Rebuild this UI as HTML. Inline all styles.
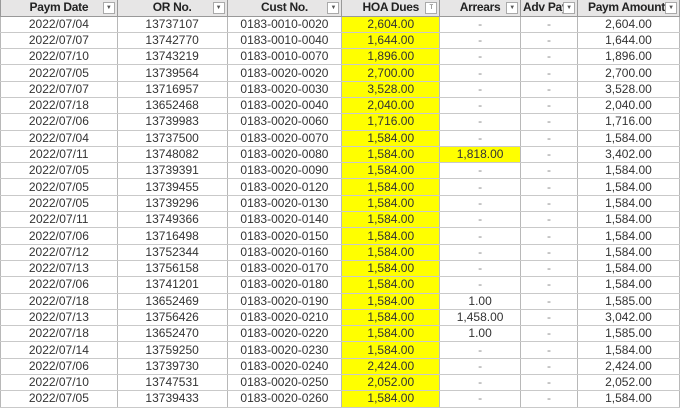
<!DOCTYPE html><html><head><style>
body{margin:0;width:680px;height:403px;overflow:hidden;background:#fff;font-family:"Liberation Sans",sans-serif;}
table{border-collapse:collapse;table-layout:fixed;position:absolute;left:0;top:-1px;font-size:12px;color:#333;}
td{height:15.3px;padding:0;border:1px solid #c9c9c9;border-left:1px solid #b8b8b8;border-right:1px solid #b8b8b8;text-align:center;white-space:nowrap;overflow:hidden;line-height:15px}
tr.h td{height:15.5px;background:#e7e6e6;font-weight:bold;color:#222;border-color:#999;position:relative;text-align:center;letter-spacing:-0.3px}
.f{position:absolute;right:2px;top:2px;width:10px;height:10px;border:1px solid #aaa;background:#fff;font-size:6px;line-height:10px;color:#555;font-weight:normal;text-align:center}
.y{background:#ffff00}
.d{color:#888}
</style></head><body>
<table>
<colgroup><col style="width:117px"><col style="width:110px"><col style="width:115px"><col style="width:98px"><col style="width:81px"><col style="width:57px"><col style="width:102px"></colgroup>
<tr class="h"><td>Paym Date<span class="f">▼</span></td><td>OR No.<span class="f">▼</span></td><td>Cust No.<span class="f">▼</span></td><td>HOA Dues<span class="f">T</span></td><td>Arrears<span class="f">▼</span></td><td style="text-align:left;padding-left:2px">Adv Pay<span class="f">▼</span></td><td style="text-align:left;padding-left:10px">Paym Amount<span class="f">▼</span></td></tr>
<tr><td>2022/07/04</td><td>13737107</td><td>0183-0010-0020</td><td class="y">2,604.00</td><td class="d">-</td><td class="d">-</td><td>2,604.00</td></tr>
<tr><td>2022/07/07</td><td>13742770</td><td>0183-0010-0040</td><td class="y">1,644.00</td><td class="d">-</td><td class="d">-</td><td>1,644.00</td></tr>
<tr><td>2022/07/10</td><td>13743219</td><td>0183-0010-0070</td><td class="y">1,896.00</td><td class="d">-</td><td class="d">-</td><td>1,896.00</td></tr>
<tr><td>2022/07/05</td><td>13739564</td><td>0183-0020-0020</td><td class="y">2,700.00</td><td class="d">-</td><td class="d">-</td><td>2,700.00</td></tr>
<tr><td>2022/07/07</td><td>13716957</td><td>0183-0020-0030</td><td class="y">3,528.00</td><td class="d">-</td><td class="d">-</td><td>3,528.00</td></tr>
<tr><td>2022/07/18</td><td>13652468</td><td>0183-0020-0040</td><td class="y">2,040.00</td><td class="d">-</td><td class="d">-</td><td>2,040.00</td></tr>
<tr><td>2022/07/06</td><td>13739983</td><td>0183-0020-0060</td><td class="y">1,716.00</td><td class="d">-</td><td class="d">-</td><td>1,716.00</td></tr>
<tr><td>2022/07/04</td><td>13737500</td><td>0183-0020-0070</td><td class="y">1,584.00</td><td class="d">-</td><td class="d">-</td><td>1,584.00</td></tr>
<tr><td>2022/07/11</td><td>13748082</td><td>0183-0020-0080</td><td class="y">1,584.00</td><td class="y">1,818.00</td><td class="d">-</td><td>3,402.00</td></tr>
<tr><td>2022/07/05</td><td>13739391</td><td>0183-0020-0090</td><td class="y">1,584.00</td><td class="d">-</td><td class="d">-</td><td>1,584.00</td></tr>
<tr><td>2022/07/05</td><td>13739455</td><td>0183-0020-0120</td><td class="y">1,584.00</td><td class="d">-</td><td class="d">-</td><td>1,584.00</td></tr>
<tr><td>2022/07/05</td><td>13739296</td><td>0183-0020-0130</td><td class="y">1,584.00</td><td class="d">-</td><td class="d">-</td><td>1,584.00</td></tr>
<tr><td>2022/07/11</td><td>13749366</td><td>0183-0020-0140</td><td class="y">1,584.00</td><td class="d">-</td><td class="d">-</td><td>1,584.00</td></tr>
<tr><td>2022/07/06</td><td>13716498</td><td>0183-0020-0150</td><td class="y">1,584.00</td><td class="d">-</td><td class="d">-</td><td>1,584.00</td></tr>
<tr><td>2022/07/12</td><td>13752344</td><td>0183-0020-0160</td><td class="y">1,584.00</td><td class="d">-</td><td class="d">-</td><td>1,584.00</td></tr>
<tr><td>2022/07/13</td><td>13756158</td><td>0183-0020-0170</td><td class="y">1,584.00</td><td class="d">-</td><td class="d">-</td><td>1,584.00</td></tr>
<tr><td>2022/07/06</td><td>13741201</td><td>0183-0020-0180</td><td class="y">1,584.00</td><td class="d">-</td><td class="d">-</td><td>1,584.00</td></tr>
<tr><td>2022/07/18</td><td>13652469</td><td>0183-0020-0190</td><td class="y">1,584.00</td><td>1.00</td><td class="d">-</td><td>1,585.00</td></tr>
<tr><td>2022/07/13</td><td>13756426</td><td>0183-0020-0210</td><td class="y">1,584.00</td><td>1,458.00</td><td class="d">-</td><td>3,042.00</td></tr>
<tr><td>2022/07/18</td><td>13652470</td><td>0183-0020-0220</td><td class="y">1,584.00</td><td>1.00</td><td class="d">-</td><td>1,585.00</td></tr>
<tr><td>2022/07/14</td><td>13759250</td><td>0183-0020-0230</td><td class="y">1,584.00</td><td class="d">-</td><td class="d">-</td><td>1,584.00</td></tr>
<tr><td>2022/07/06</td><td>13739730</td><td>0183-0020-0240</td><td class="y">2,424.00</td><td class="d">-</td><td class="d">-</td><td>2,424.00</td></tr>
<tr><td>2022/07/10</td><td>13747531</td><td>0183-0020-0250</td><td class="y">2,052.00</td><td class="d">-</td><td class="d">-</td><td>2,052.00</td></tr>
<tr><td>2022/07/05</td><td>13739433</td><td>0183-0020-0260</td><td class="y">1,584.00</td><td class="d">-</td><td class="d">-</td><td>1,584.00</td></tr>
</table>
</body></html>
